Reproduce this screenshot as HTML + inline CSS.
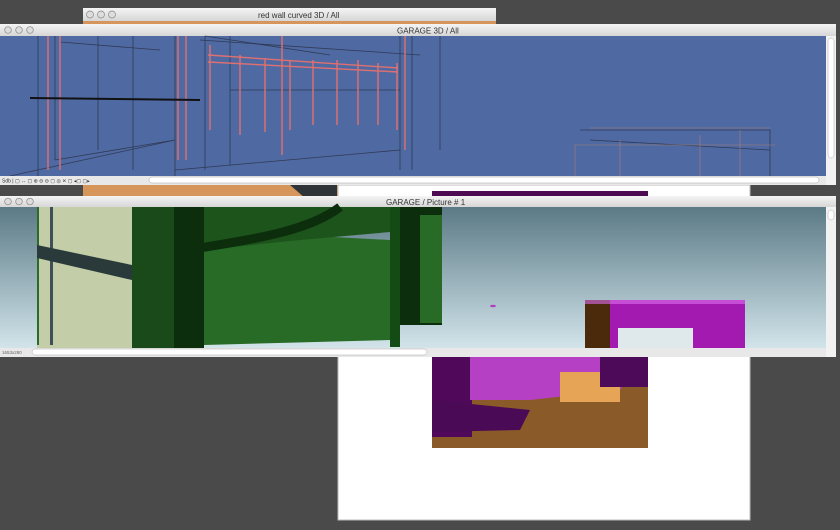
<!DOCTYPE html>
<html><head><style>
body{margin:0;width:840px;height:525px;background:#4a4a4a;overflow:hidden;font-family:"Liberation Sans",sans-serif;}
</style></head><body>
<svg width="840" height="525" viewBox="0 0 840 525" xmlns="http://www.w3.org/2000/svg" font-family="Liberation Sans, sans-serif">
<defs>
<linearGradient id="tb" x1="0" y1="0" x2="0" y2="1"><stop offset="0" stop-color="#f4f4f4"/><stop offset="1" stop-color="#d6d6d6"/></linearGradient>
<linearGradient id="sky" x1="0" y1="0" x2="0" y2="1"><stop offset="0" stop-color="#5b7a86"/><stop offset="1" stop-color="#d2e4ea"/></linearGradient>
</defs>
<!-- window A -->
<rect x="83" y="8" width="413" height="190" fill="#d6955a"/>
<rect x="83" y="8" width="413" height="13" fill="url(#tb)"/>
<g fill="#ddd" stroke="#888" stroke-width="0.7"><circle cx="90" cy="14.5" r="3.5"/><circle cx="101" cy="14.5" r="3.5"/><circle cx="112" cy="14.5" r="3.5"/></g>
<text x="258" y="18" font-size="8" fill="#333">red wall curved 3D / All</text>
<polygon points="290,185 337,185 337,198 305,198" fill="#2e3438"/>
<!-- window C -->
<rect x="338" y="185" width="412" height="335" fill="#fff" stroke="#bbb"/>
<rect x="432" y="191" width="216" height="8" fill="#4e0b52"/>
<rect x="432" y="357" width="216" height="91" fill="#8a5a28"/>
<rect x="432" y="357" width="40" height="80" fill="#50085a"/>
<polygon points="470,357 640,357 620,390 530,400 470,400" fill="#b640c4"/>
<rect x="560" y="372" width="60" height="30" fill="#e6a457"/>
<polygon points="432,400 530,410 520,430 432,432" fill="#4a0a55"/>
<rect x="600" y="357" width="48" height="30" fill="#4c0a58"/>
<!-- window B -->
<rect x="0" y="24" width="836" height="161" fill="#ececec"/>
<rect x="0" y="24" width="836" height="12" fill="url(#tb)"/>
<g fill="#ddd" stroke="#888" stroke-width="0.7"><circle cx="8" cy="30" r="3.3"/><circle cx="19" cy="30" r="3.3"/><circle cx="30" cy="30" r="3.3"/></g>
<text x="397" y="33.5" font-size="8" fill="#333">GARAGE 3D / All</text>
<rect x="0" y="36" width="826" height="140" fill="#4f69a2"/>
<g stroke="#2f3a55" stroke-width="0.8" fill="none">
<path d="M38,36 V176 M55,36 V160 M98,36 V150 M133,36 V170 M175,36 V176 M205,36 V170 M230,36 V165 M400,36 V170 M412,36 V170 M440,36 V150 M55,160 L175,140 M175,170 L400,150 M205,36 L330,55 M230,90 L400,90 M10,176 L175,140"/>
<path d="M60,42 L160,50 M200,40 L420,55 M580,130 L770,130 L770,176 M590,140 L770,150"/>
</g>
<g stroke="#e07070" stroke-width="1.4">
<path d="M48,36 V170 M60,36 V170 M178,36 V160 M186,36 V160 M210,45 V130 M240,55 V135 M265,58 V132 M290,60 V130 M313,60 V125 M337,60 V125 M358,60 V125 M378,63 V125 M397,63 V130 M405,36 V150 M282,36 V155"/>
<path d="M208,55 L398,68 M208,62 L398,72"/>
</g>
<path d="M30,98 L200,100" stroke="#111" stroke-width="2"/>
<g stroke="#a88070" stroke-width="0.6" fill="none"><path d="M590,128 H770 M585,145 H775 M575,176 V145 H600 M620,176 V140 M700,176 V135 M740,176 V130"/></g>
<rect x="0" y="176" width="826" height="9" fill="#e8e8e8"/>
<text x="2" y="182.5" font-size="5" fill="#333">Sdb | ▢ ↔ ▢ ⊕ ⊖ ⊖ ▢ ◎ ✕ ▢ ◂▢ ▢▸</text>
<rect x="149" y="177" width="670" height="6" rx="3" fill="#fff" stroke="#aaa" stroke-width="0.5"/>
<rect x="826" y="36" width="10" height="149" fill="#f2f2f2"/>
<rect x="828" y="38" width="6" height="120" rx="3" fill="#fff" stroke="#aaa" stroke-width="0.5"/>
<!-- window D -->
<rect x="0" y="196" width="836" height="161" fill="#ececec"/>
<rect x="0" y="196" width="836" height="11" fill="url(#tb)"/>
<g fill="#ddd" stroke="#888" stroke-width="0.7"><circle cx="8" cy="201.5" r="3.3"/><circle cx="19" cy="201.5" r="3.3"/><circle cx="30" cy="201.5" r="3.3"/></g>
<text x="386" y="205" font-size="8" fill="#333">GARAGE / Picture # 1</text>
<rect x="0" y="207" width="826" height="141" fill="url(#sky)"/>
<rect x="37" y="207" width="95" height="141" fill="#c3cda8"/>
<rect x="37" y="207" width="2" height="138" fill="#2a6a2a"/>
<rect x="50" y="207" width="3" height="138" fill="#3f4f5a"/>
<polygon points="37,245 132,265 132,280 37,258" fill="#2a3a3a"/>
<rect x="132" y="207" width="42" height="141" fill="#1a4a1a"/>
<rect x="174" y="207" width="30" height="141" fill="#0c2e0c"/>
<polygon points="204,230 390,240 390,340 204,345" fill="#276b27"/>
<polygon points="204,207 390,207 390,232 300,240 204,250" fill="#1c541c"/>
<path d="M200,248 C260,238 310,230 340,207" stroke="#0c2e0c" stroke-width="9" fill="none"/>
<rect x="390" y="207" width="10" height="140" fill="#144a14"/>
<rect x="400" y="207" width="42" height="118" fill="#0c2e0c"/>
<rect x="420" y="215" width="22" height="108" fill="#276b27"/>
<ellipse cx="493" cy="306" rx="3" ry="1.2" fill="#b040c0"/>
<rect x="585" y="300" width="160" height="48" fill="#a21ab0"/>
<path d="M585,300 L585,348 L620,348 L620,315 L745,312" fill="none"/>
<rect x="585" y="300" width="25" height="48" fill="#4a2a0a"/>
<rect x="618" y="328" width="75" height="20" fill="#dfe9ec"/>
<rect x="585" y="300" width="160" height="4" fill="#e070f0" opacity="0.6"/>
<rect x="0" y="348" width="826" height="9" fill="#e8e8e8"/>
<text x="2" y="354" font-size="4.5" fill="#666">1653x280</text>
<rect x="32" y="349" width="395" height="6" rx="3" fill="#fff" stroke="#aaa" stroke-width="0.5"/>
<rect x="826" y="207" width="10" height="150" fill="#f2f2f2"/>
<rect x="828" y="210" width="6" height="10" rx="3" fill="#fff" stroke="#aaa" stroke-width="0.5"/>
</svg>
</body></html>
